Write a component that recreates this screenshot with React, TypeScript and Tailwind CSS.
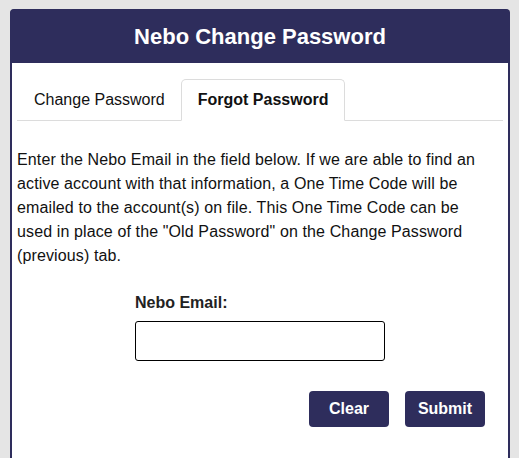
import React from 'react';

export default function App() {
  return (
    <div className="min-h-[458px] w-[519px] bg-[#e5e5e5] pl-[10px] pt-[9px] font-['Liberation_Sans',Arial,sans-serif] text-[#222]">
      <div className="w-[500px] h-[460px] rounded-t-[5px] border-2 border-t-0 border-[#2e2d5c] bg-white">
        {/* Header */}
        <div className="h-[54px] rounded-t-[4px] bg-[#2e2d5c] -mx-[2px] flex items-center justify-center">
          <h1 className="text-[22px] font-bold text-white leading-none pt-[2px]">Nebo Change Password</h1>
        </div>

        <div className="px-[5px] pt-[16px]">
          {/* Tabs */}
          <div className="flex border-b border-[#dcdcdc]">
            <button className="h-[41px] pl-[17px] pr-[16px] text-[16px] text-[#111]">Change Password</button>
            <button className="-mb-px h-[42px] px-[16px] text-[16px] font-bold text-[#111] bg-white border border-b-white border-[#dcdcdc] rounded-t-[5px]">
              Forgot Password
            </button>
          </div>

          <p className="mt-[27px] w-[490px] text-[16px] leading-[24px] tracking-[0.12px] text-[#111]">
            Enter the Nebo Email in the field below. If we are able to find an
            <br />
            active account with that information, a One Time Code will be
            <br />
            emailed to the account(s) on file. This One Time Code can be
            <br />
            used in place of the "Old Password" on the Change Password
            <br />
            (previous) tab.
          </p>

          <div className="mt-[25px] flex justify-center">
            <div className="w-[250px]">
              <label className="block text-[16px] font-bold leading-[20px] text-[#222]">Nebo Email:</label>
              <input className="mt-[8px] block h-[40px] w-[250px] rounded-[3px] border border-black px-2 outline-none" />
            </div>
          </div>

          <div className="mt-[30px] flex justify-end gap-[16px] pr-[18px]">
            <button className="h-[36px] w-[80px] rounded-[4px] bg-[#2e2d5c] text-[16px] font-bold text-white">Clear</button>
            <button className="h-[36px] w-[80px] rounded-[4px] bg-[#2e2d5c] text-[16px] font-bold text-white">Submit</button>
          </div>
        </div>
      </div>
    </div>
  );
}
